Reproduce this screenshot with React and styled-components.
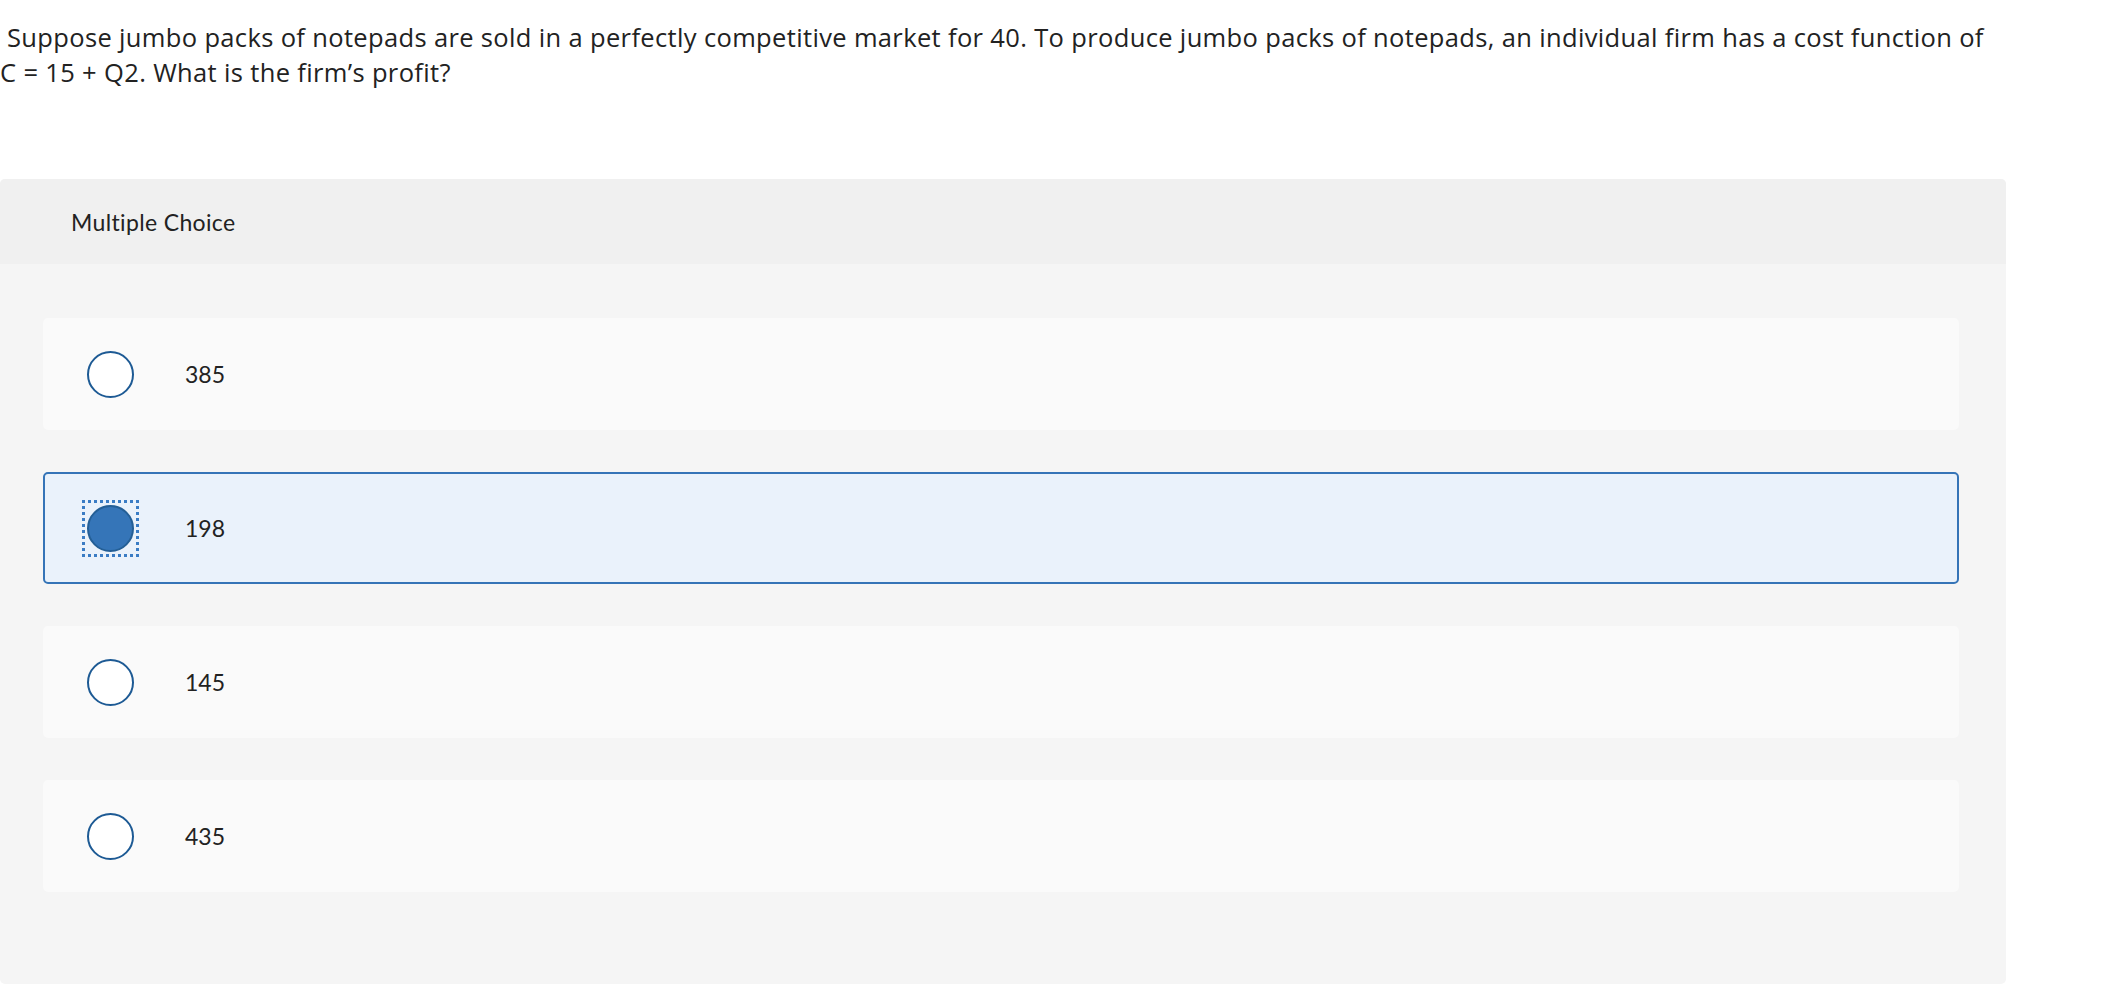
import styled, { createGlobalStyle } from "styled-components";

const choices = [
	{ id: "a", label: "385" },
	{ id: "b", label: "198", selected: true },
	{ id: "c", label: "145" },
	{ id: "d", label: "435" },
];

const GlobalStyle = createGlobalStyle`
	body {
		margin: 0;
		background: #ffffff;
		font-family: Lato, "Liberation Sans", sans-serif;
		color: #222222;
	}
`;

const App = () => {
	return (
		<Page>
			<GlobalStyle />
			<Question>
				&nbsp;Suppose jumbo packs of notepads are sold in a perfectly competitive
				market for 40. To produce jumbo packs of notepads, an individual firm has
				a cost function of
				<br />C = 15 + Q2. What is the firm’s profit?
			</Question>

			<Panel>
				<PanelHeader>Multiple Choice</PanelHeader>
				<ChoiceList>
					{choices.map(({ id, label, selected }) => (
						<Choice key={id} $selected={selected}>
							<FocusRing $active={selected}>
								<Radio $selected={selected} />
							</FocusRing>
							<Label>{label}</Label>
						</Choice>
					))}
				</ChoiceList>
			</Panel>
		</Page>
	);
};

export default App;

const Page = styled.main`
	width: 2114px;
	padding-top: 20px;
`;

const Question = styled.p`
	margin: 0;
	width: 2110px;
	font-family: "Open Sans", Lato, sans-serif;
	font-size: 25.5px;
	letter-spacing: 0.35px;
	line-height: 35px;
	color: #222222;
`;

const Panel = styled.section`
	margin-top: 89px;
	width: 2006px;
	background: #f5f5f5;
	border-radius: 5px;
	overflow: hidden;
`;

const PanelHeader = styled.header`
	height: 85px;
	display: flex;
	align-items: center;
	padding-left: 71px;
	background: #f0f0f0;
	font-size: 23px;
	letter-spacing: 0.35px;
	color: #222222;
`;

const ChoiceList = styled.div`
	display: flex;
	flex-direction: column;
	gap: 42px;
	padding: 54px 47px 92px 43px;
`;

const Choice = styled.label`
	height: 112px;
	box-sizing: border-box;
	display: flex;
	align-items: center;
	padding-left: ${(p) => (p.$selected ? "37px" : "39px")};
	border-radius: 5px;
	background: ${(p) => (p.$selected ? "#eaf2fb" : "#fafafa")};
	border: ${(p) => (p.$selected ? "2px solid #3574b7" : "none")};
	cursor: pointer;
`;

const FocusRing = styled.span`
	display: flex;
	align-items: center;
	justify-content: center;
	width: 57px;
	height: 57px;
	box-sizing: border-box;
	flex-shrink: 0;
	border: 3px dotted ${(p) => (p.$active ? "#3a7cc4" : "transparent")};
`;

const Radio = styled.span`
	width: 47px;
	height: 47px;
	box-sizing: border-box;
	border-radius: 50%;
	border: 2px solid ${(p) => (p.$selected ? "#245f96" : "#1d5a94")};
	background: ${(p) => (p.$selected ? "#3575b8" : "#ffffff")};
`;

const Label = styled.span`
	margin-left: 46px;
	font-size: 23px;
	color: #222222;
`;
